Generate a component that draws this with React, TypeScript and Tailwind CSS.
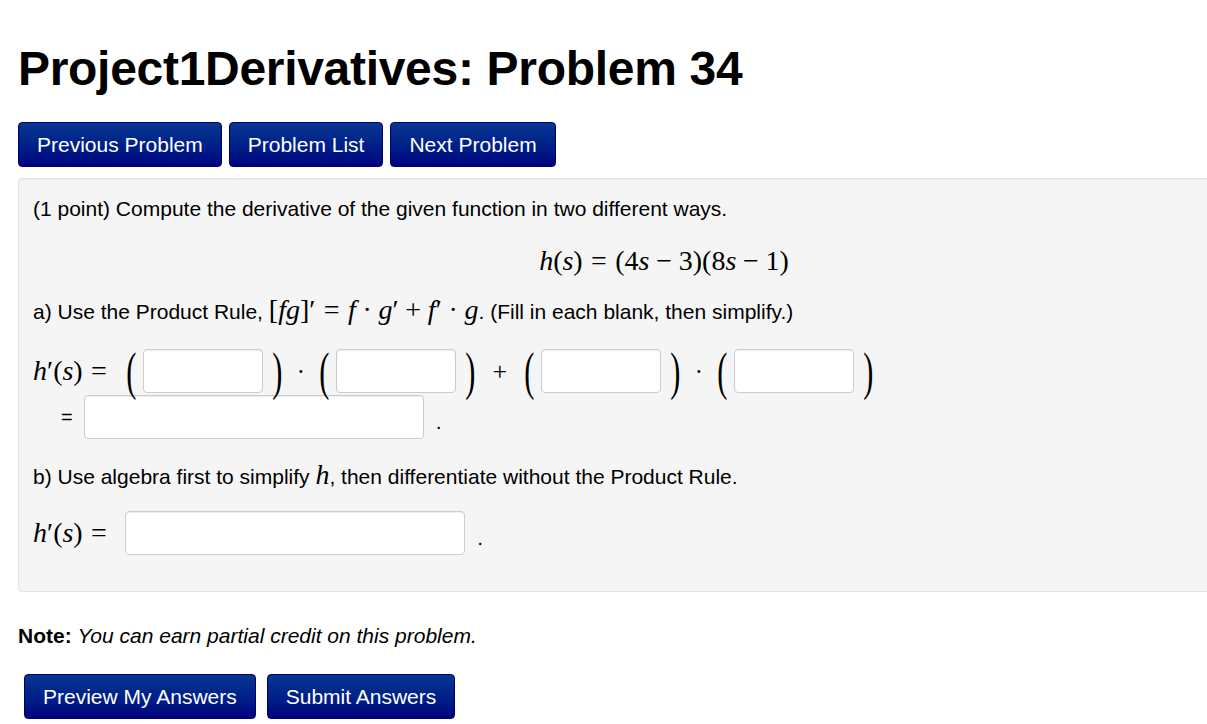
import React from 'react';

const sans = "font-['Liberation_Sans',Arial,sans-serif]";
const serif = "font-['Liberation_Serif','Times_New_Roman',serif]";

function NavButton({ children, className = '' }: { children: React.ReactNode; className?: string }) {
  return (
    <button
      className={`h-[45px] rounded-[4px] border border-[#00006b] bg-gradient-to-b from-[#0b3592] to-[#00007f] px-[18px] text-[21px] text-white ${className}`}
    >
      {children}
    </button>
  );
}

function Blank({ w = 'w-[120px]' }: { w?: string }) {
  return (
    <input
      type="text"
      className={`h-[44px] ${w} shrink-0 rounded-[4px] border border-[#cccccc] bg-white shadow-[inset_0_1px_1px_rgba(0,0,0,0.075)] outline-none`}
    />
  );
}

function Paren({ c }: { c: string }) {
  return (
    <span className={`${serif} inline-flex w-[12px] justify-center`}>
      <span className="inline-block scale-x-[0.8] scale-y-[1.4] text-[38px] font-light leading-none">{c}</span>
    </span>
  );
}

function Op({ c, w }: { c: string; w: string }) {
  return <span className={`${serif} inline-flex ${w} justify-center text-[26px]`}>{c}</span>;
}

function M({ children }: { children: React.ReactNode }) {
  return <span className={`${serif} italic`}>{children}</span>;
}

// relation and binary operator spacing, roughly as TeX sets it
function Rel({ c }: { c: string }) {
  return <span className="mx-[0.3em]">{c}</span>;
}
function Bin({ c }: { c: string }) {
  return <span className="mx-[0.24em]">{c}</span>;
}

export default function App() {
  return (
    <div className={`${sans} min-h-screen overflow-hidden bg-white pl-[18px] text-black`}>
      <h1 className="pt-[41px] text-[48px] font-bold leading-[56px] tracking-[-0.3px]">
        Project1Derivatives: Problem 34
      </h1>

      <div className="mt-[25px] flex gap-[7px]">
        <NavButton>Previous Problem</NavButton>
        <NavButton>Problem List</NavButton>
        <NavButton>Next Problem</NavButton>
      </div>

      <div className="mt-[11px] h-[414px] w-[1300px] rounded-[4px] border border-[#e3e3e3] bg-[#f5f5f5] px-[14px] pt-[18px] text-[21px] shadow-[inset_0_1px_1px_rgba(0,0,0,0.05)]">
        <p className="leading-[24px]">(1 point) Compute the derivative of the given function in two different ways.</p>

        <div className="mt-[25px] flex w-[1262px] justify-center text-[28px] leading-[30px]">
          <span className={serif}>
            <M>h</M>(<M>s</M>)<Rel c="=" />(4<M>s</M><Bin c="−" />3)(8<M>s</M><Bin c="−" />1)
          </span>
        </div>

        <p className="mt-[22px] leading-[24px]">
          a) Use the Product Rule,{' '}
          <span className={`${serif} text-[28px] leading-[24px]`}>
            [<M>fg</M>]′<Rel c="=" /><M>f</M><Bin c="·" /><M>g</M>′<Bin c="+" /><M>f</M>′<Bin c="·" /><M>g</M>
          </span>
          . (Fill in each blank, then simplify.)
        </p>

        <div className="mt-[25px] flex items-center">
          <span className={`${serif} mr-[10px] text-[28px] leading-[30px]`}>
            <M>h</M>′(<M>s</M>)<Rel c="=" />
          </span>
          <Paren c="(" />
          <span className="ml-[6px] mr-[8px]"><Blank /></span>
          <Paren c=")" />
          <Op c="·" w="w-[35px]" />
          <Paren c="(" />
          <span className="ml-[6px] mr-[8px]"><Blank /></span>
          <Paren c=")" />
          <Op c="+" w="w-[47px]" />
          <Paren c="(" />
          <span className="ml-[6px] mr-[8px]"><Blank /></span>
          <Paren c=")" />
          <Op c="·" w="w-[35px]" />
          <Paren c="(" />
          <span className="ml-[6px] mr-[8px]"><Blank /></span>
          <Paren c=")" />
        </div>

        <div className="mt-[2px] flex items-center">
          <span className="ml-[28px] mr-[11px] text-[20px]">=</span>
          <Blank w="w-[340px]" />
          <span className="ml-[12px] mt-[10px]">.</span>
        </div>

        <p className="mt-[24px] leading-[24px]">
          b) Use algebra first to simplify <span className={`${serif} italic text-[28px] leading-[24px]`}>h</span>, then
          differentiate without the Product Rule.
        </p>

        <div className="mt-[22px] flex items-center">
          <span className={`${serif} mr-[10px] text-[28px] leading-[30px]`}>
            <M>h</M>′(<M>s</M>)<Rel c="=" />
          </span>
          <Blank w="w-[340px]" />
          <span className="ml-[12px] mt-[10px]">.</span>
        </div>
      </div>

      <p className="mt-[32px] text-[21px] leading-[24px]">
        <span className="font-bold">Note:</span> <i>You can earn partial credit on this problem.</i>
      </p>

      <div className="ml-[6px] mt-[26px] flex gap-[11px]">
        <NavButton>Preview My Answers</NavButton>
        <NavButton>Submit Answers</NavButton>
      </div>
    </div>
  );
}
